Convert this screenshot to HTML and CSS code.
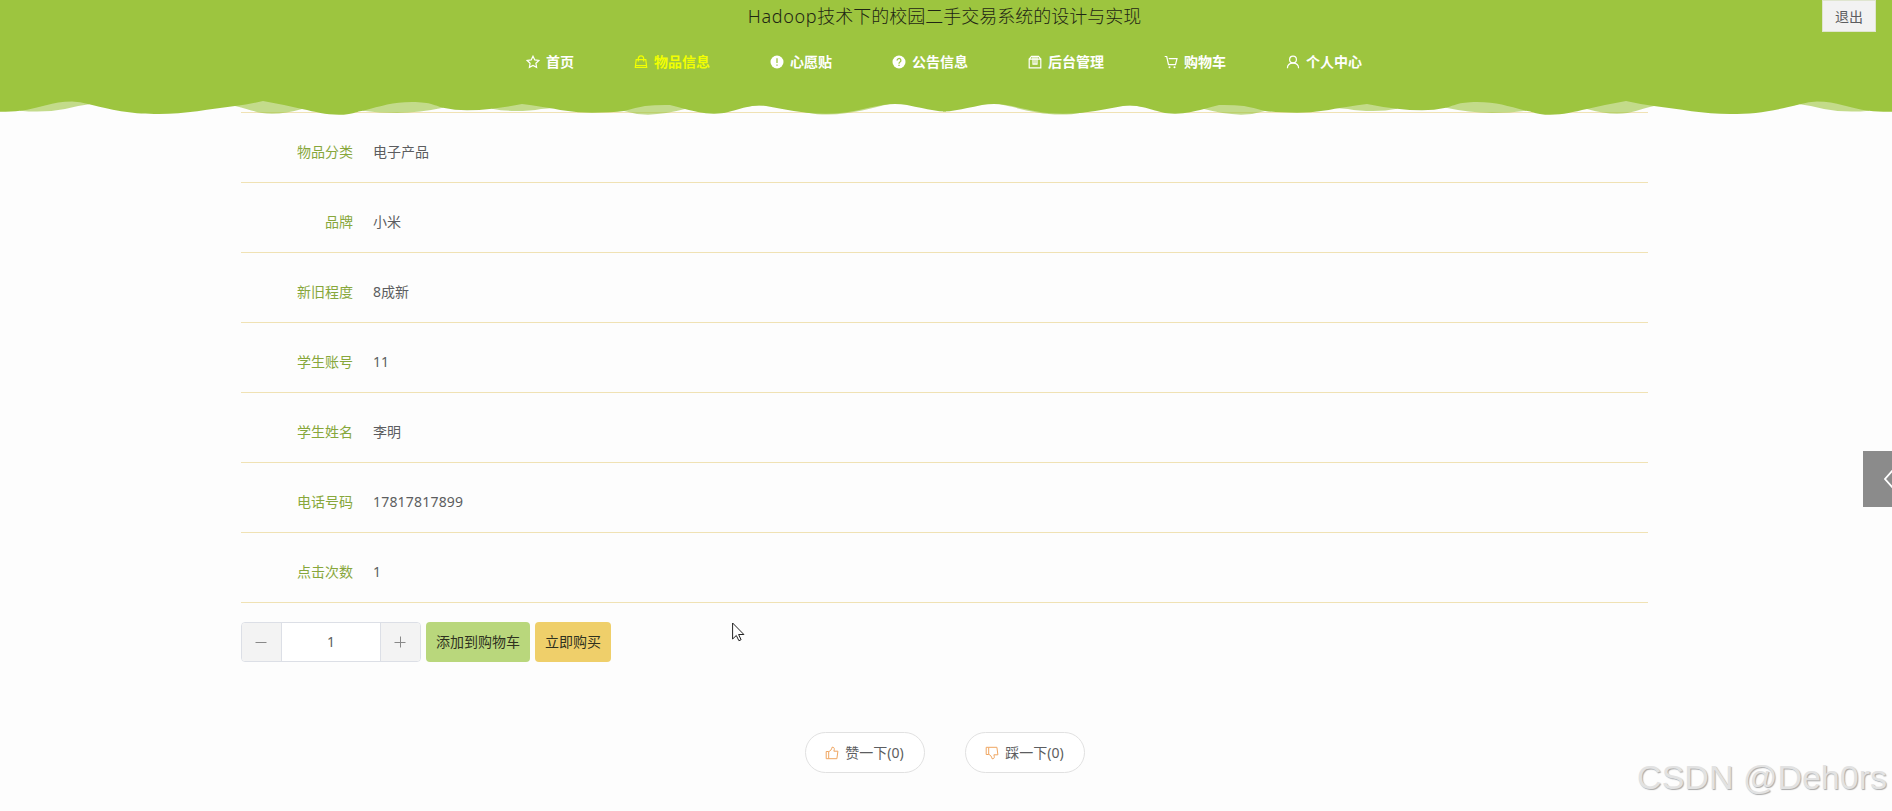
FILE: index.html
```html
<!DOCTYPE html>
<html lang="zh-CN">
<head>
<meta charset="utf-8">
<title>Hadoop技术下的校园二手交易系统的设计与实现</title>
<link rel="stylesheet" href="styles.css">
</head>
<body>
<header class="header">
  <h1 class="title"><span class="latin">Hadoop</span>技术下的校园二手交易系统的设计与实现</h1>
  <button class="logout">退出</button>
  <nav class="nav">
    <a class="nav-item"><svg class="icon" viewBox="0 0 14 14"><path d="M7 1.200l1.800 3.700 4 .6-2.900 2.800.7 4L7 10.400l-3.600 1.900.7-4L1.200 5.500l4-.6z"/></svg>首页</a>
    <a class="nav-item active"><svg class="icon" viewBox="0 0 14 14"><path d="M2.200 4.700h9.600l.9 7.800H1.300zM4.300 6.500V3.800a2.700 2.900 0 0 1 5.400 0v2.700M1.600 10.600h10.800"/></svg>物品信息</a>
    <a class="nav-item"><svg class="icon" viewBox="0 0 14 14"><circle class="fill" cx="7" cy="7" r="6.500"/><path class="cut" d="M7 3.300v4.800M7 9.500v1.200"/></svg>心愿贴</a>
    <a class="nav-item"><svg class="icon" viewBox="0 0 14 14"><circle class="fill" cx="7" cy="7" r="6.500"/><path class="cut" d="M5.100 5.500a1.900 1.900 0 1 1 2.900 1.500Q7 7.600 7 8.700M7 9.700v1.200"/></svg>公告信息</a>
    <a class="nav-item"><svg class="icon" viewBox="0 0 14 14"><path d="M1.200 4.200h11.600v8.600H1.200zM1.200 4.200L3.500 1.400h7l2.300 2.800M5 1.400v7.800h4V1.400M7 1.400v7.800"/></svg>后台管理</a>
    <a class="nav-item"><svg class="icon" viewBox="0 0 14 14"><path d="M.7 1.500h2l1.800 8.200h7l1.500-6H4.700"/><circle class="fill" cx="5.500" cy="12.300" r="1"/><circle class="fill" cx="10.500" cy="12.300" r="1"/></svg>购物车</a>
    <a class="nav-item"><svg class="icon" viewBox="0 0 14 14"><circle cx="7" cy="4.500" r="3.400"/><path d="M1.400 13.300c0-3 2.200-5.200 5.600-5.200s5.600 2.200 5.600 5.200"/></svg>个人中心</a>
  </nav>
  <svg class="wave" viewBox="0 0 1892 20">
    <defs>
      <path id="crest" d="M-6 -4V11.700H0Q12 11.700 20 10.700C40 8 52 1.400 72 1.400Q80 1.500 89 4.300C118 11.500 133 14 159 14S210 9 235 6Q250 4 263 1Q283 4.500 302 9C316 12 325 14.700 339 14.700S354 12 363 10.700C382 6 392 2 412 2S435 6 443 7.700Q455 10.300 467 10.300T492 8.700Q508 7 522 4Q532 5 541 6.700C560 9.500 572 12.700 592 12.700Q612 12.700 624 11Q636 7.500 645 6Q656 4.700 670 5Q678 7 685 9C696 11.500 702 13.700 714 13.700S728 11.500 734 10.500Q744 7 752 6Q759 5 766 6C784 9 802 13.700 826 13.700S865 8 883 5Q895 2.800 907 5Q924 8.500 932 10T946 11.500V-4Z"/>
      <path id="haze" d="M20 10.700Q44 13 65 9Q76 6 89 4.300V-2H20ZM235 6C250 9 256 13.700 272 13.700Q286 13.700 302 9V-2H235ZM363 10.700Q379 13 397 13Q420 12.600 443 7.700V-2H363ZM492 8.700Q503 11 516 11Q530 11 541 9Q550 8 560 7.500V-2H492ZM624 11Q636 14.700 648 14.700Q666 14 685 9V-2H624ZM745 7Q765 3.200 786 8C804 12 812 14.600 828 14.600C852 14.600 874 7 890 4V-2H745Z"/>
    </defs>
    <g class="wave-haze"><use href="#haze"/><use href="#haze" transform="translate(1889) scale(-1 1)"/></g>
    <g class="wave-crest"><use href="#crest"/><use href="#crest" transform="translate(1889) scale(-1 1)"/></g>
  </svg>
</header>
<main class="main">
  <dl class="details">
    <div class="row"><dt>物品分类</dt><dd>电子产品</dd></div>
    <div class="row"><dt>品牌</dt><dd>小米</dd></div>
    <div class="row"><dt>新旧程度</dt><dd>8成新</dd></div>
    <div class="row"><dt>学生账号</dt><dd>11</dd></div>
    <div class="row"><dt>学生姓名</dt><dd>李明</dd></div>
    <div class="row"><dt>电话号码</dt><dd class="digits">17817817899</dd></div>
    <div class="row"><dt>点击次数</dt><dd>1</dd></div>
  </dl>
  <div class="actions">
    <div class="stepper">
      <span class="step"><svg class="sign" viewBox="0 0 12 12"><path d="M.5 6.500h11"/></svg></span>
      <span class="count">1</span>
      <span class="step"><svg class="sign" viewBox="0 0 12 12"><path d="M.5 6.500h11M6.500 .5v11"/></svg></span>
    </div>
    <button class="btn cart">添加到购物车</button>
    <button class="btn buy">立即购买</button>
  </div>
  <div class="votes">
    <button class="vote"><svg class="thumb" viewBox="0 0 14 14"><path d="M1.200 5.500h2.500v7.200H1.200zM3.700 5.600C5.500 5 6.600 3.600 7 1.300c1.600-.4 2.500.7 2.300 2.100L8.900 5.200h4l-1 7.500H3.700"/></svg>赞一下(0)</button>
    <button class="vote"><svg class="thumb down" viewBox="0 0 14 14"><path d="M1.200 5.500h2.500v7.200H1.200zM3.700 5.600C5.500 5 6.600 3.600 7 1.300c1.600-.4 2.500.7 2.300 2.100L8.900 5.200h4l-1 7.500H3.700"/></svg>踩一下(0)</button>
  </div>
</main>
<div class="drawer"><svg class="chevron" viewBox="0 0 8 18"><path d="M9 0L1 9l8 9"/></svg></div>
<svg class="cursor" viewBox="0 0 13 20"><path d="M.6 1v16l3.700-3.500 2.600 5.200 2.200-1-2.500-5.200h5.300z"/></svg>
<div class="watermark">CSDN @Deh0rs</div>
</body>
</html>
```
FILE: styles.css
```css
* { box-sizing: border-box; }
body {
  margin: 0;
  height: 811px;
  overflow: hidden;
  position: relative;
  background: #fdfdfd;
  color: #5c5d60;
  font: 14px/20px "Noto Sans", "Noto Sans CJK SC", sans-serif;
}
button { font: inherit; color: inherit; padding: 0; margin: 0; }
.header {
  position: relative;
  z-index: 1;
  height: 100px;
  background: #9dc53f;
}
.title {
  margin: 0;
  width: 1889px;
  height: 33px;
  text-align: center;
  font-size: 18px;
  line-height: 33px;
  font-weight: 300;
  color: #1f2614;
}
.latin { letter-spacing: .7px; }
.logout {
  position: absolute;
  top: 0;
  right: 16px;
  width: 54px;
  height: 32px;
  padding-top: 1px;
  background: #f2f2f2;
  border: 1px solid #dfe5cf;
}
.nav {
  display: flex;
  justify-content: center;
  width: 1888px;
  height: 57px;
}
.nav-item {
  display: flex;
  align-items: center;
  gap: 6px;
  padding: 0 30px;
  color: #fff;
  font-weight: 700;
}
.nav-item.active { color: #f2ff00; }
.icon { width: 14px; height: 14px; fill: none; stroke: currentColor; stroke-width: 1.2; }
.icon .fill { fill: currentColor; stroke: none; }
.icon .cut { stroke: #9dc53f; stroke-width: 1.3; }
.wave {
  position: absolute;
  left: 0;
  top: 100px;
  width: 1892px;
  height: 20px;
}
.wave-crest { fill: #9dc53f; }
.wave-haze { fill: #9dc53f; opacity: .6; }
.main { width: 1407px; margin: 12px 0 0 241px; }
.details { margin: 0; border-top: 1px solid #f0e2b4; }
.row {
  display: flex;
  align-items: center;
  height: 70px;
  padding-top: 9px;
  border-bottom: 1px solid #f0e2b4;
}
.row dt { width: 112px; text-align: right; color: #87a73b; }
.row dd { margin: 0 0 0 20px; }
.row .digits { letter-spacing: .2px; }
.actions { display: flex; gap: 5px; margin-top: 19px; height: 40px; }
.stepper {
  display: flex;
  width: 180px;
  border: 1px solid #dcdfe6;
  border-radius: 4px;
  overflow: hidden;
  background: #fff;
}
.step { width: 39px; display: grid; place-items: center; padding-right: 1px; background: #f3f3f3; }
.count { flex: 1; text-align: center; line-height: 38px; border: solid #dcdfe6; border-width: 0 1px; }
.sign { width: 12px; height: 12px; fill: none; stroke: #888; }
.btn { height: 40px; border: 0; border-radius: 4px; color: #2f321f; }
.cart { width: 104px; background: #b9d77c; }
.buy { width: 76px; background: #efcf6a; }
.votes { display: flex; gap: 40px; margin: 70px 0 0 564px; }
.vote {
  display: flex;
  align-items: center;
  justify-content: center;
  gap: 6px;
  width: 120px;
  height: 41px;
  padding-right: 1px;
  border: 1px solid #e1e1e1;
  border-radius: 21px;
  background: #fff;
}
.thumb { width: 14px; height: 14px; fill: none; stroke: #efa560; }
.down { transform: scaleY(-1); }
.drawer {
  position: absolute;
  right: 0;
  top: 451px;
  width: 29px;
  height: 56px;
  display: flex;
  align-items: center;
  justify-content: flex-end;
  background: #8b8b8b;
}
.chevron { width: 8px; height: 18px; fill: none; stroke: #fff; stroke-width: 1.8; }
.cursor { position: absolute; left: 732px; top: 622px; width: 13px; height: 20px; fill: #fff; stroke: #222; }
.watermark {
  position: absolute;
  right: 5px;
  bottom: 14px;
  font: 34px/40px "Liberation Sans", Arial, sans-serif;
  color: #e2e2e2;
  text-shadow: 1px 1px 1px #aaa;
  white-space: nowrap;
}
```
